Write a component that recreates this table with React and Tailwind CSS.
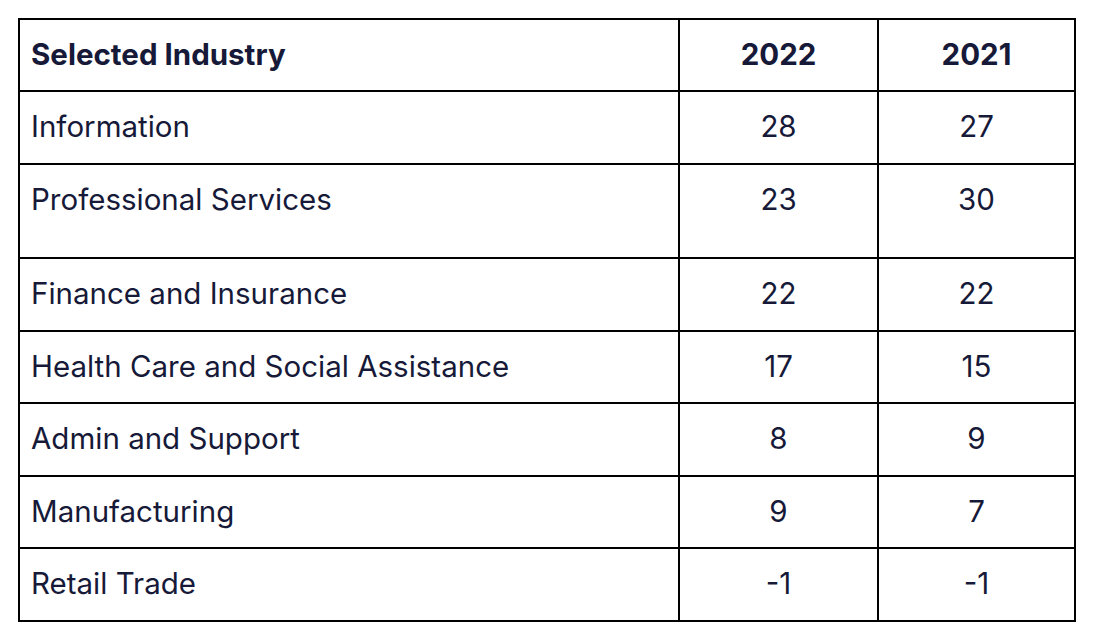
const rows = [
  { name: 'Information', a: '28', b: '27', h: 'h-[73px]' },
  { name: 'Professional Services', a: '23', b: '30', h: 'h-[94px]' },
  { name: 'Finance and Insurance', a: '22', b: '22', h: 'h-[73px]' },
  { name: 'Health Care and Social Assistance', a: '17', b: '15', h: 'h-[72px]' },
  { name: 'Admin and Support', a: '8', b: '9', h: 'h-[73px]' },
  { name: 'Manufacturing', a: '9', b: '7', h: 'h-[72px]' },
  { name: 'Retail Trade', a: '-1', b: '-1', h: 'h-[73px]' },
];

export default function App() {
  return (
    <div className="min-h-screen bg-white pt-[18px] pl-[18px] font-['Inter',sans-serif] text-[#161938]">
      <table className="w-[1056px] table-fixed border-collapse border-2 border-black text-[29.5px] leading-[1.5]">
        <colgroup>
          <col className="w-[660px]" />
          <col className="w-[199px]" />
          <col className="w-[197px]" />
        </colgroup>
        <thead>
          <tr className="h-[72px]">
            <th className="border-2 border-black px-[11px] pt-[12px] text-left align-top font-bold">Selected Industry</th>
            <th className="border-2 border-black pt-[12px] text-center align-top font-bold">2022</th>
            <th className="border-2 border-black pt-[12px] text-center align-top font-bold">2021</th>
          </tr>
        </thead>
        <tbody>
          {rows.map((r) => (
            <tr key={r.name} className={r.h}>
              <td className="border-2 border-black px-[11px] pt-[12px] align-top">{r.name}</td>
              <td className="border-2 border-black pt-[12px] text-center align-top">{r.a}</td>
              <td className="border-2 border-black pt-[12px] text-center align-top">{r.b}</td>
            </tr>
          ))}
        </tbody>
      </table>
    </div>
  );
}
